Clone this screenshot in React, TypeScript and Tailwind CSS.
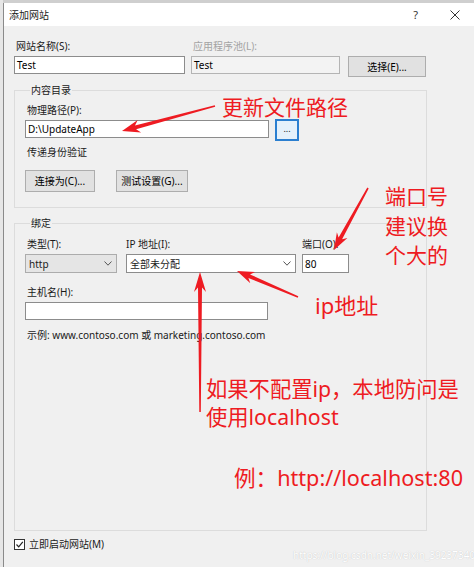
import clsx from 'clsx';

const ui = "[font-family:'Noto_Sans','Noto_Sans_CJK_SC',sans-serif]";
const red = "[font-family:'Noto_Sans','Noto_Sans_CJK_SC',sans-serif]";

function arrow(x1: number, y1: number, x2: number, y2: number, w0: number, w1: number, hw: number, hl: number) {
  const dx = x2 - x1;
  const dy = y2 - y1;
  const len = Math.hypot(dx, dy);
  const ux = dx / len;
  const uy = dy / len;
  const nx = -uy;
  const ny = ux;
  const nkx = x2 - ux * hl * 0.78;
  const nky = y2 - uy * hl * 0.78;
  const bx = x2 - ux * hl;
  const by = y2 - uy * hl;
  const pts = [
    [x1 + (nx * w0) / 2, y1 + (ny * w0) / 2],
    [nkx + (nx * w1) / 2, nky + (ny * w1) / 2],
    [bx + (nx * hw) / 2, by + (ny * hw) / 2],
    [x2, y2],
    [bx - (nx * hw) / 2, by - (ny * hw) / 2],
    [nkx - (nx * w1) / 2, nky - (ny * w1) / 2],
    [x1 - (nx * w0) / 2, y1 - (ny * w0) / 2],
  ];
  return pts.map((p) => p.map((v) => v.toFixed(1)).join(',')).join(' ');
}

function Chevron() {
  return (
    <svg width="8" height="5" viewBox="0 0 8 5">
      <path d="M0.5 0.5 L4 4.2 L7.5 0.5" fill="none" stroke="#555" strokeWidth="1" />
    </svg>
  );
}

function TextBox({ value, className }: { value?: string; className?: string }) {
  return (
    <div className={clsx('flex items-center border pl-[2px] text-[10px] text-black', className)}>
      {value}
    </div>
  );
}

function Btn({ label, className }: { label: string; className?: string }) {
  return (
    <div className={clsx('flex items-center justify-center border border-[#adadad] bg-[#e1e1e1] text-[10px] text-black', className)}>
      {label}
    </div>
  );
}

export default function App() {
  return (
    <div className={clsx('relative h-[567px] w-[474px] overflow-hidden bg-[#cfcfcf] text-[10px] leading-[12px] text-[#1a1a1a]', ui)}>
      <div className="flex h-full">
        {/* window behind */}
        <div className="w-[3px] bg-[#e6e6e6]" />

        <div className="mt-[3px] flex flex-1 flex-col border-l border-[#8a8a8a]">
          {/* title bar */}
          <div className="flex h-[23px] items-center bg-white pl-[5px] pr-[14px]">
            <span className="text-[10px]">添加网站</span>
            <span className="ml-auto mr-[32px] text-[11px] text-[#333]">?</span>
            <svg width="10" height="10" viewBox="0 0 10 10">
              <path d="M0.5 0.5 L9.5 9.5 M9.5 0.5 L0.5 9.5" stroke="#333" strokeWidth="1" />
            </svg>
          </div>

          {/* body */}
          <div className="flex-1 bg-[#f0f0f0] pl-[10px] pt-[14px]">
            <div className="w-[413px]">
              <div className="flex items-start">
                <div className="flex w-[171px] flex-col">
                  <span className="pl-[2px]">网站名称(S):</span>
                  <TextBox value="Test" className="mt-[4px] h-[18px] border-[#8c8c8c] bg-white" />
                </div>
                <div className="ml-[6px] flex w-[149px] flex-col">
                  <span className="pl-[2px] text-[#a3a3a3]">应用程序池(L):</span>
                  <TextBox value="Test" className="mt-[4px] h-[18px] border-[#b4b4b4] bg-[#f3f3f3]" />
                </div>
                <Btn label="选择(E)..." className="ml-[8px] mt-[16px] h-[21px] w-[78px]" />
              </div>

              {/* 内容目录 */}
              <fieldset className="mt-[7px] border border-[#dcdcdc] px-[10px] pb-[15px]">
                <legend className="ml-[5px] px-[1px] text-[10px] leading-[12px]">内容目录</legend>
                <div className="mt-[8px] pl-[2px]">物理路径(P):</div>
                <div className="mt-[3px] flex items-start">
                  <TextBox value="D:\UpdateApp" className="mt-[1px] h-[18px] w-[244px] border-[#8c8c8c] bg-white" />
                  <div className="ml-[6px] flex h-[22px] w-[24px] items-center justify-center border-2 border-[#2b7fd0] bg-[#e5f1fb] pb-[3px] text-[9px] leading-none">
                    ...
                  </div>
                </div>
                <div className="mt-[5px] pl-[2px]">传递身份验证</div>
                <div className="mt-[12px] flex">
                  <Btn label="连接为(C)..." className="h-[22px] w-[70px]" />
                  <Btn label="测试设置(G)..." className="ml-[21px] h-[22px] w-[72px]" />
                </div>
              </fieldset>

              {/* 绑定 */}
              <fieldset className="mt-[9px] border border-[#dcdcdc] px-[10px] pb-[189px]">
                <legend className="ml-[5px] px-[1px] text-[10px] leading-[12px]">绑定</legend>
                <div className="mt-[9px] flex">
                  <div className="flex w-[92px] flex-col">
                    <span className="pl-[2px]">类型(T):</span>
                    <div className="mt-[4px] flex h-[19px] items-center border border-[#acacac] bg-[#e5e5e5] pl-[3px] pr-[4px]">
                      <span>http</span>
                      <span className="ml-auto">
                        <Chevron />
                      </span>
                    </div>
                  </div>
                  <div className="ml-[9px] flex w-[170px] flex-col">
                    <span>IP 地址(I):</span>
                    <div className="mt-[4px] flex h-[19px] items-center border border-[#8c8c8c] bg-white pl-[3px] pr-[4px]">
                      <span>全部未分配</span>
                      <span className="ml-auto">
                        <Chevron />
                      </span>
                    </div>
                  </div>
                  <div className="ml-[6px] flex w-[47px] flex-col">
                    <span className="whitespace-nowrap">端口(O):</span>
                    <TextBox value="80" className="mt-[4px] h-[19px] border-[#8c8c8c] bg-white" />
                  </div>
                </div>
                <div className="mt-[13px] pl-[2px]">主机名(H):</div>
                <TextBox className="mt-[4px] h-[18px] w-[243px] border-[#8c8c8c] bg-white" />
                <div className="mt-[9px] pl-[2px]">示例: www.contoso.com 或 marketing.contoso.com</div>
              </fieldset>

              <div className="mt-[7px] flex items-center">
                <div className="flex h-[11px] w-[11px] items-center justify-center border border-[#333] bg-white">
                  <svg width="9" height="9" viewBox="0 0 9 9">
                    <path d="M1.5 4.5 L3.7 6.8 L7.8 1.8" fill="none" stroke="#222" strokeWidth="1.2" />
                  </svg>
                </div>
                <span className="ml-[4px]">立即启动网站(M)</span>
              </div>
            </div>
          </div>
        </div>
      </div>

      {/* watermark */}
      <div className="absolute left-[293px] top-[549px] text-[10px] leading-[12px] text-white [text-shadow:0_0_1px_#b8b8b8]">
        https://blog.csdn.net/weixin_39237340
      </div>

      {/* red annotations */}
      <svg className="pointer-events-none absolute left-0 top-0" width="474" height="567">
        <g fill="#ee1b22">
          <polygon points={arrow(215, 106, 122, 131, 1.5, 4, 13, 18)} />
          <polygon points={arrow(368, 188, 334, 250, 1.5, 4, 12, 17)} />
          <polygon points={arrow(298, 297, 237, 271, 1.5, 4, 12, 17)} />
          <polygon points={arrow(200, 412, 200, 272, 1.5, 4, 12, 20)} />
        </g>
      </svg>
      <div className={clsx('absolute left-[222px] top-[95px] text-[21px] leading-[24px] text-[#ee1b22]', red)}>更新文件路径</div>
      <div className={clsx('absolute left-[385px] top-[182px] text-[21px] leading-[29.5px] text-[#ee1b22]', red)}>
        端口号
        <br />
        建议换
        <br />
        个大的
      </div>
      <div className={clsx('absolute left-[315px] top-[293px] text-[22px] leading-[24px] text-[#ee1b22]', red)}>ip地址</div>
      <div className={clsx('absolute left-[206px] top-[375px] text-[21.3px] leading-[28px] text-[#ee1b22]', red)}>
        如果不配置ip，本地防问是
        <br />
        使用localhost
      </div>
      <div className={clsx('absolute left-[234px] top-[465px] text-[21.6px] leading-[26px] text-[#ee1b22]', red)}>
        例：http://localhost:80
      </div>
    </div>
  );
}
